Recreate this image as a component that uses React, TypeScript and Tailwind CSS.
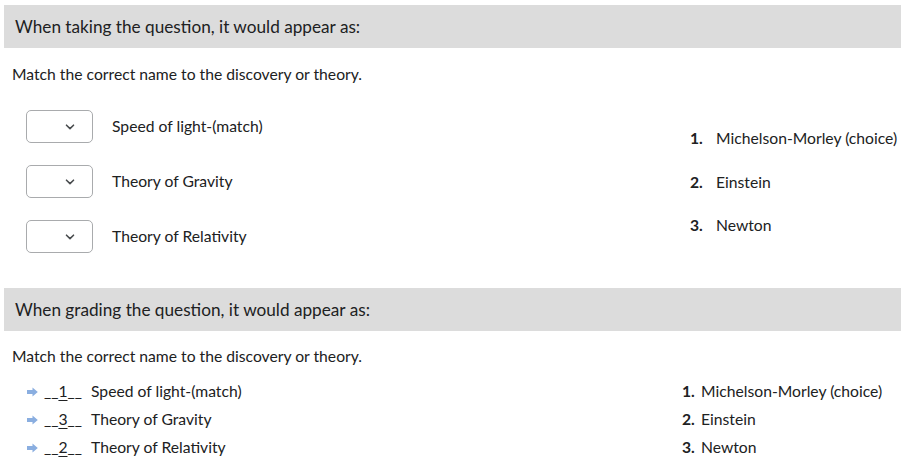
import React from 'react';

const font = { fontFamily: 'Lato, "Open Sans", sans-serif' };

const prompts = ['Speed of light-(match)', 'Theory of Gravity', 'Theory of Relativity'];
const choices = ['Michelson-Morley (choice)', 'Einstein', 'Newton'];
const answers = ['1', '3', '2'];

const Chevron = () => (
  <svg width="10" height="6" viewBox="0 0 10 6" fill="none">
    <path d="M1.5 1.2 L5 4.6 L8.5 1.2" stroke="#494c4e" strokeWidth="1.6" strokeLinecap="round" strokeLinejoin="round" />
  </svg>
);

const Arrow = () => (
  <svg width="11" height="10" viewBox="0 0 11 10">
    <path d="M0 3 H5.5 V0.5 L10.8 5 L5.5 9.5 V7 H0 Z" fill="#8aaee0" />
  </svg>
);

const Header = ({ children }: { children: React.ReactNode }) => (
  <div className="ml-[4px] h-[43px] bg-[#dcdcdc] flex items-center pl-[11px] text-[17.2px] text-[#202122]">
    {children}
  </div>
);

export default function App() {
  return (
    <div className="w-[901px] h-[470px] bg-white text-[#202122] overflow-hidden" style={font}>
      <div className="pt-[5px]">
        <Header>When taking the question, it would appear as:</Header>

        <div className="pl-[12px] mt-[17px] text-[15.7px] leading-[18px]">
          Match the correct name to the discovery or theory.
        </div>

        <div className="flex mt-[27px]">
          <div className="flex flex-col gap-[22px] pl-[26px] w-[690px]">
            {prompts.map((p) => (
              <div key={p} className="flex items-start">
                <div className="w-[67px] h-[33px] border border-[#a9abad] rounded-[5px] flex items-center justify-end pr-[17px]">
                  <Chevron />
                </div>
                <div className="ml-[19px] text-[15.7px] leading-[18px] mt-[7px]">{p}</div>
              </div>
            ))}
          </div>
          <div className="flex flex-col justify-center gap-[25.5px] text-[15.7px] leading-[18px]">
            {choices.map((c, i) => (
              <div key={c} className="flex">
                <span className="w-[26px] font-bold">{i + 1}.</span>
                <span>{c}</span>
              </div>
            ))}
          </div>
        </div>

        <div className="mt-[35px]">
          <Header>When grading the question, it would appear as:</Header>
        </div>

        <div className="pl-[12px] mt-[16px] text-[15.7px] leading-[18px]">
          Match the correct name to the discovery or theory.
        </div>

        <div className="flex mt-[18px] text-[15.7px]">
          <div className="flex flex-col gap-[10px] pl-[27px] w-[682px]">
            {prompts.map((p, i) => (
              <div key={p} className="flex items-center h-[18px]">
                <Arrow />
                <span className="ml-[6px] w-[47px] whitespace-pre">
                  __<span className="underline underline-offset-[3px]">{answers[i]}</span>__
                </span>
                <span>{p}</span>
              </div>
            ))}
          </div>
          <div className="flex flex-col gap-[10px]">
            {choices.map((c, i) => (
              <div key={c} className="flex h-[18px] items-center">
                <span className="font-bold w-[19px]">{i + 1}.</span>
                <span>{c}</span>
              </div>
            ))}
          </div>
        </div>
      </div>
    </div>
  );
}
